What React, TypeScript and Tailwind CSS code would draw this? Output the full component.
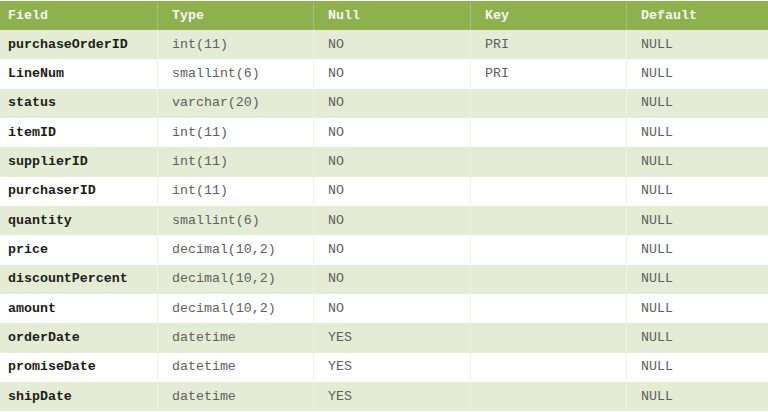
import React from "react";

const rows: [string, string, string, string, string][] = [
  ["purchaseOrderID", "int(11)", "NO", "PRI", "NULL"],
  ["LineNum", "smallint(6)", "NO", "PRI", "NULL"],
  ["status", "varchar(20)", "NO", "", "NULL"],
  ["itemID", "int(11)", "NO", "", "NULL"],
  ["supplierID", "int(11)", "NO", "", "NULL"],
  ["purchaserID", "int(11)", "NO", "", "NULL"],
  ["quantity", "smallint(6)", "NO", "", "NULL"],
  ["price", "decimal(10,2)", "NO", "", "NULL"],
  ["discountPercent", "decimal(10,2)", "NO", "", "NULL"],
  ["amount", "decimal(10,2)", "NO", "", "NULL"],
  ["orderDate", "datetime", "YES", "", "NULL"],
  ["promiseDate", "datetime", "YES", "", "NULL"],
  ["shipDate", "datetime", "YES", "", "NULL"],
];

const headers = ["Field", "Type", "Null", "Key", "Default"];
const cols = "grid grid-cols-[157px_156px_157px_156px_142px]";

export default function App() {
  return (
    <div
      className="w-[768px] h-[412px] overflow-hidden bg-white pt-[1px]"
      style={{ fontFamily: '"Liberation Mono", "Courier New", monospace' }}
    >
      <div className={`${cols} h-[29px] bg-[#8eb04f] text-[13.3px] font-bold text-[#f4f7ee]`}>
        {headers.map((h, i) => (
          <div
            key={h}
            className={`flex items-center ${i === 0 ? "pl-[8px]" : "pl-[14px] border-l border-[#a3c070]"}`}
          >
            {h}
          </div>
        ))}
      </div>
      {rows.map((r, ri) => (
        <div
          key={r[0]}
          className={`${cols} h-[29.35px] text-[13.3px] ${ri % 2 === 0 ? "bg-[#e4ecd6]" : "bg-white"}`}
        >
          {r.map((c, ci) => (
            <div
              key={ci}
              className={`flex items-center ${
                ci === 0
                  ? "pl-[8px] font-bold text-[#1c1c1c]"
                  : "pl-[14px] border-l border-[#edf2e4] text-[#606060]"
              }`}
            >
              {c}
            </div>
          ))}
        </div>
      ))}
    </div>
  );
}
